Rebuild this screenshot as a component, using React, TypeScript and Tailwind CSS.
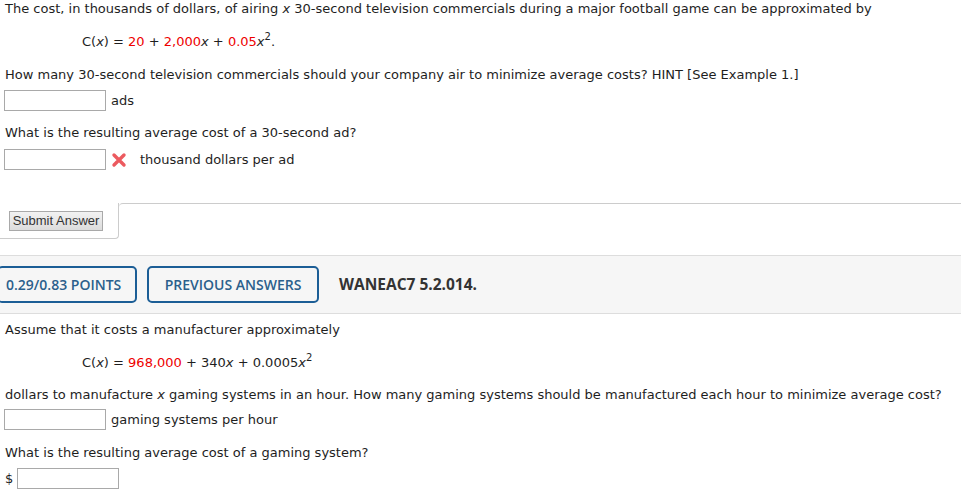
import React from "react";

const font = { fontFamily: '"DejaVu Sans", Verdana, sans-serif' };

function Input({ w = "w-[102px]" }: { w?: string }) {
  return <div className={`${w} h-[21px] border border-[#a9a9a9] bg-white shrink-0`} />;
}

function Sup({ children }: { children: React.ReactNode }) {
  return <sup className="text-[10px] relative -top-[6px]">{children}</sup>;
}

function XIcon() {
  return (
    <svg width="16" height="16" viewBox="0 0 16 16" className="shrink-0">
      <path d="M3 3 L13 13 M13 3 L3 13" stroke="#ec5a5f" strokeWidth="3.4" strokeLinecap="round" />
    </svg>
  );
}

export default function App() {
  return (
    <div className="w-[961px] h-[499px] bg-white overflow-hidden text-[13px] text-[#1e1e1e]" style={font}>
      <div className="pl-[5px]">
        <p className="h-[18px] leading-[18px]">
          The cost, in thousands of dollars, of airing <i>x</i> 30-second television commercials during a major football game can be approximated by
        </p>
        <p className="mt-[15px] h-[18px] leading-[18px] pl-[77px]">
          C(<i>x</i>) = <span className="text-[#ee0000]">20</span> + <span className="text-[#ee0000]">2,000</span><i>x</i> + <span className="text-[#ee0000]">0.05</span><i>x</i><Sup>2</Sup>.
        </p>
        <p className="mt-[15px] h-[18px] leading-[18px]">
          How many 30-second television commercials should your company air to minimize average costs? HINT [See Example 1.]
        </p>
      </div>
      <div className="mt-[6px] pl-[4px] flex items-center h-[21px]">
        <Input />
        <span className="ml-[5px]">ads</span>
      </div>
      <p className="mt-[13px] pl-[5px] h-[18px] leading-[18px]">What is the resulting average cost of a 30-second ad?</p>
      <div className="mt-[7px] pl-[4px] flex items-center h-[21px]">
        <Input />
        <span className="ml-[5px]"><XIcon /></span>
        <span className="ml-[13px]">thousand dollars per ad</span>
      </div>

      <div className="mt-[33px] flex">
        <div className="w-[119px] h-[36px] border-r border-b border-[#cccccc] rounded-br-[4px] pl-[9px] pt-[8px]">
          <button
            className="w-[94px] h-[20px] border border-[#a9a9a9] bg-gradient-to-b from-[#f2f2f2] to-[#dcdcdc] text-[#333] text-[13px] leading-[18px]"
            style={{ fontFamily: '"Liberation Sans", Arial, sans-serif' }}
          >
            Submit Answer
          </button>
        </div>
        <div className="flex-1 border-t border-[#cccccc] rounded-tl-[4px]" />
      </div>

      <div
        className="mt-[16px] h-[59px] border-y border-[#dddddd] bg-[#f6f6f6] flex items-center gap-[10px]"
        style={{ fontFamily: '"Open Sans", sans-serif' }}
      >
        <div className="-ml-[3px] w-[140px] h-[37px] border-2 border-[#1c5e96] rounded-[5px] flex items-center pl-[7px] text-[14px] font-semibold text-[#2b5f8c]">
          0.29/0.83 POINTS
        </div>
        <div className="w-[172px] h-[37px] border-2 border-[#1c5e96] rounded-[5px] flex items-center justify-center text-[14px] font-semibold text-[#2b5f8c]">
          PREVIOUS ANSWERS
        </div>
        <div className="ml-[10px] text-[15.5px] font-bold text-[#333]">WANEAC7 5.2.014.</div>
      </div>

      <div className="pl-[5px]">
        <p className="mt-[7px] h-[18px] leading-[18px]">Assume that it costs a manufacturer approximately</p>
        <p className="mt-[15px] h-[18px] leading-[18px] pl-[77px]">
          C(<i>x</i>) = <span className="text-[#ee0000]">968,000</span> + 340<i>x</i> + 0.0005<i>x</i><Sup>2</Sup>
        </p>
        <p className="mt-[14px] h-[18px] leading-[18px] whitespace-nowrap">
          dollars to manufacture <i>x</i> gaming systems in an hour. How many gaming systems should be manufactured each hour to minimize average cost?
        </p>
      </div>
      <div className="mt-[5px] pl-[4px] flex items-center h-[21px]">
        <Input />
        <span className="ml-[5px]">gaming systems per hour</span>
      </div>
      <p className="mt-[14px] pl-[5px] h-[18px] leading-[18px]">What is the resulting average cost of a gaming system?</p>
      <div className="mt-[6px] pl-[5px] flex items-center h-[21px]">
        <span>$</span>
        <span className="ml-[4px]"><Input /></span>
      </div>
    </div>
  );
}
